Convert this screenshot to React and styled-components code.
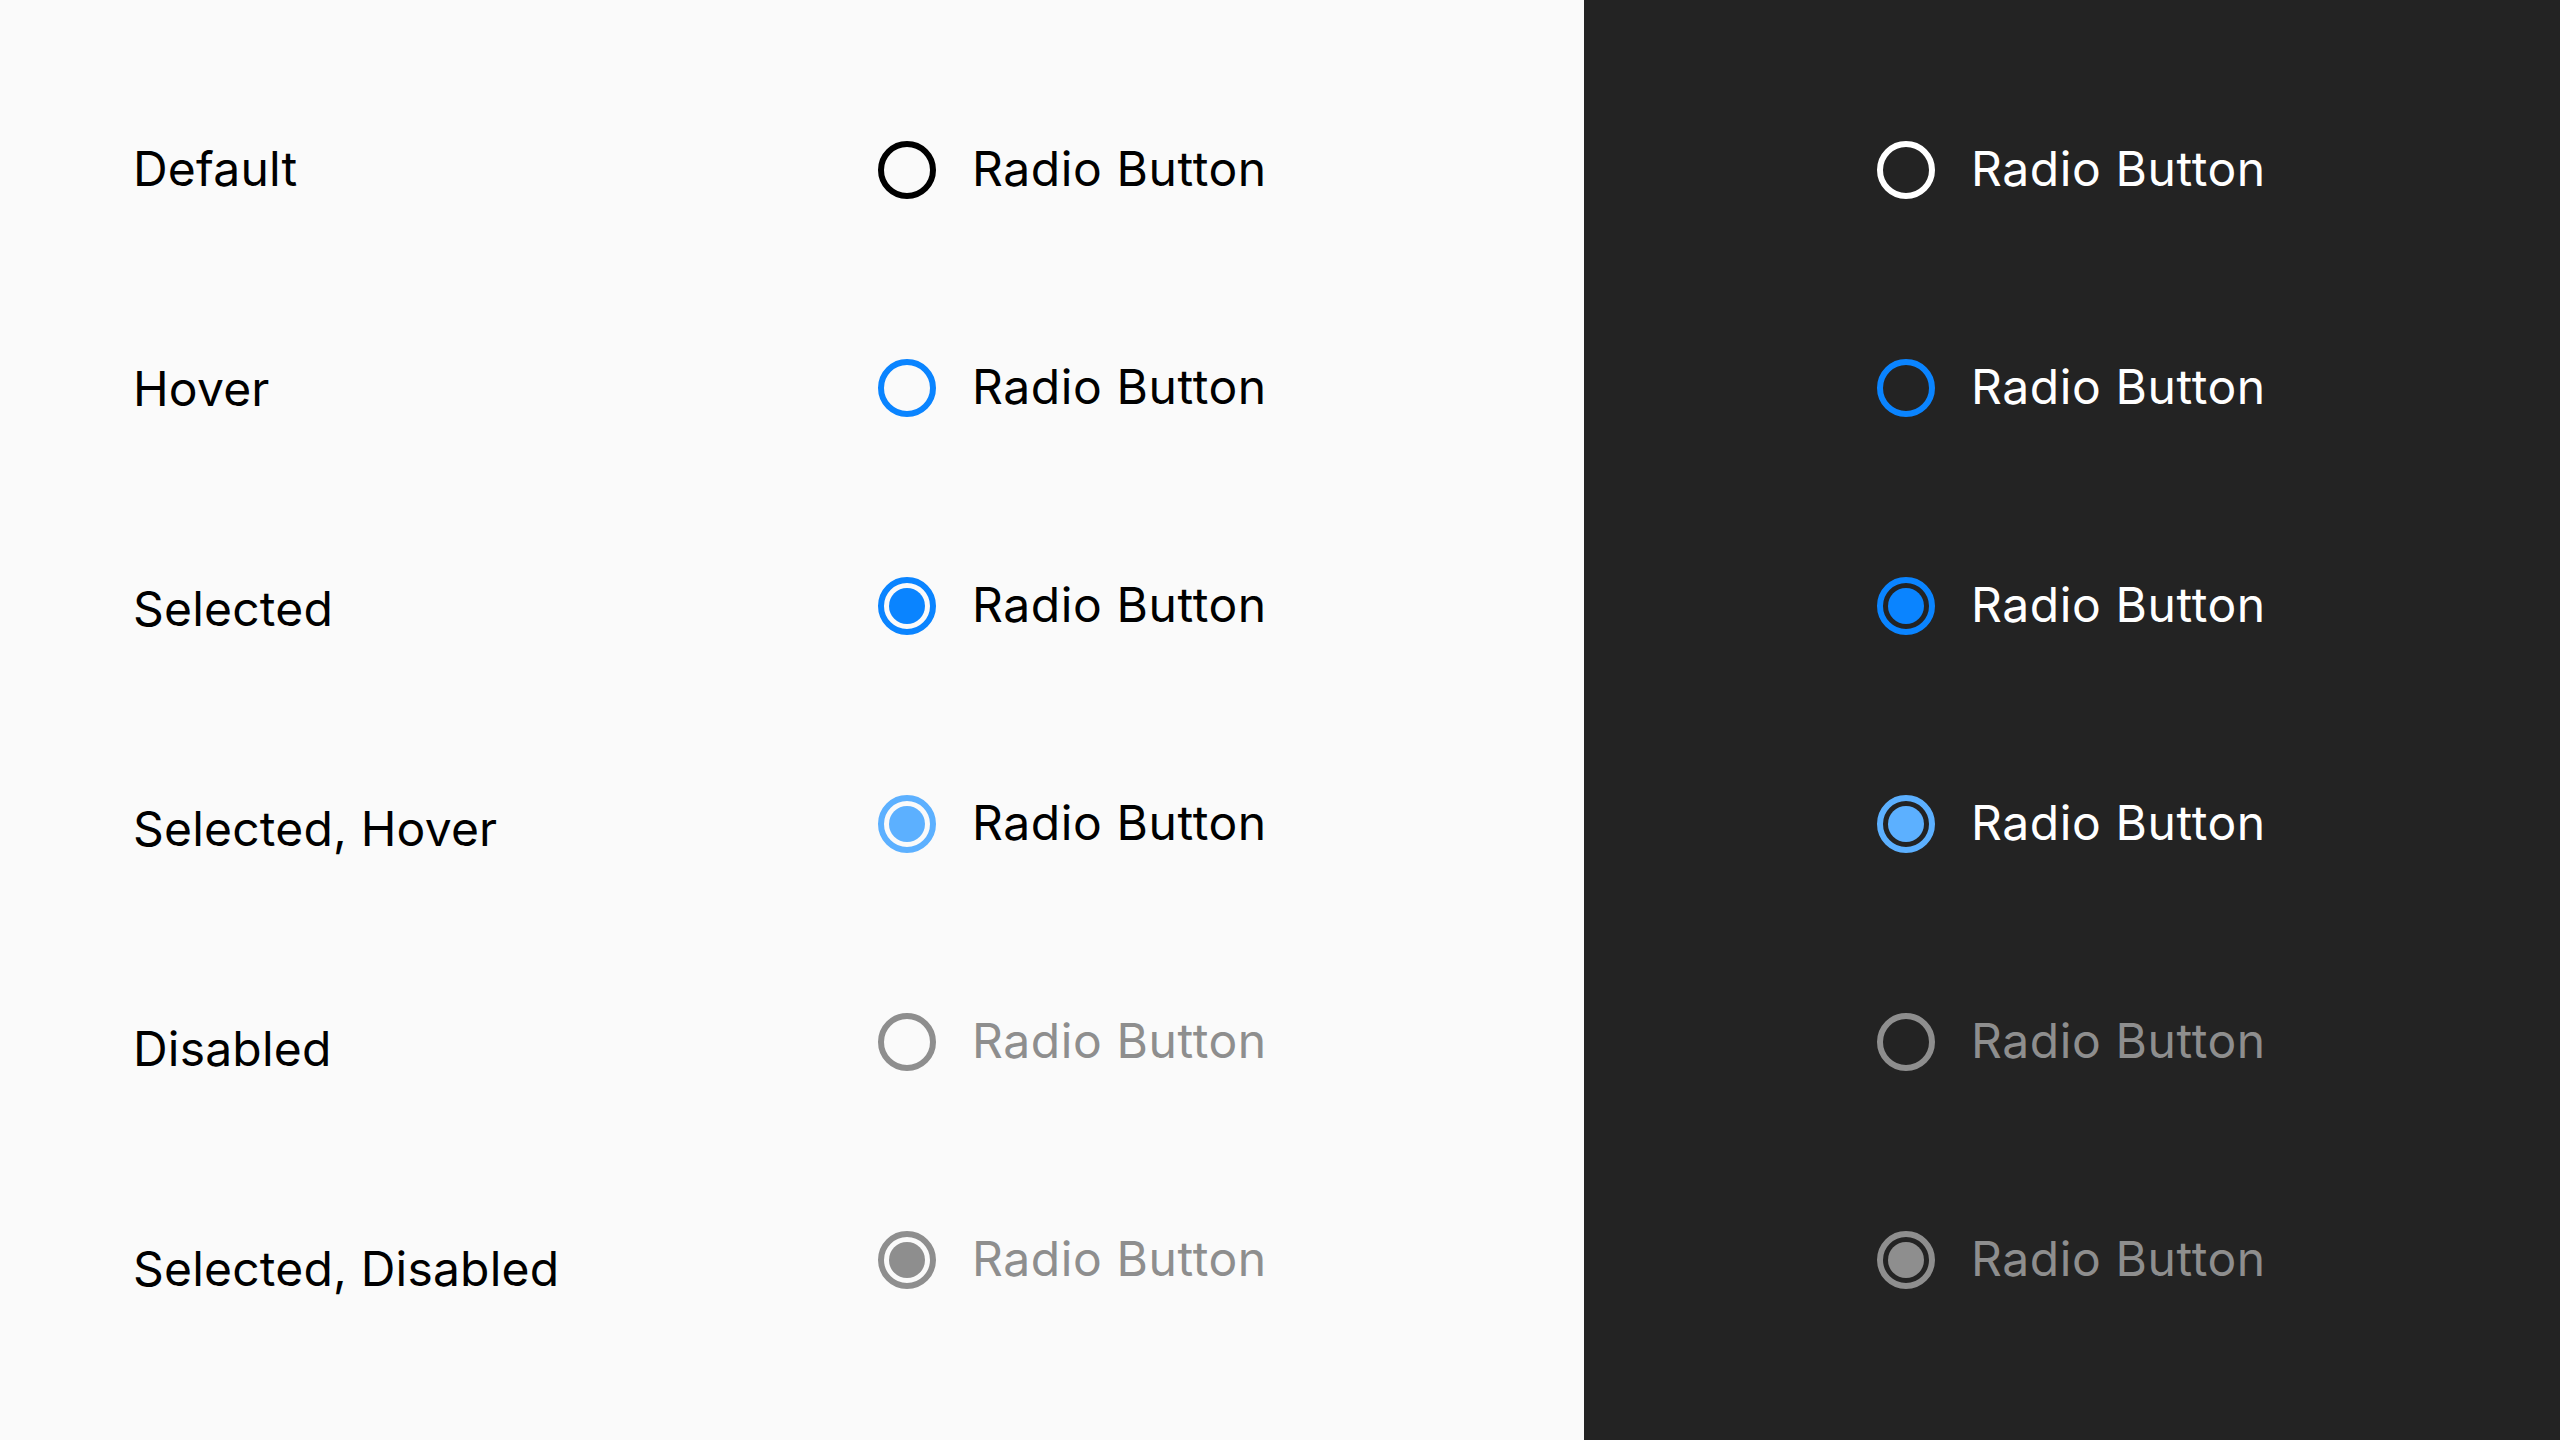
import React from 'react';
import styled, { createGlobalStyle } from 'styled-components';

const GlobalStyle = createGlobalStyle`
  html, body {
    margin: 0;
    padding: 0;
  }
  body {
    font-family: Inter, "Noto Sans", sans-serif;
    -webkit-font-smoothing: antialiased;
  }
`;

const Page = styled.div`
  display: grid;
  grid-template-columns: 1584px 1fr;
  width: 2560px;
  height: 1440px;
`;

const Panel = styled.div`
  background: ${(p) => (p.dark ? '#232323' : '#fafafa')};
  padding: 61px 0 0 ${(p) => (p.dark ? '293px' : '133px')};
  display: flex;
  align-items: flex-start;
`;

const Column = styled.div`
  width: ${(p) => p.width || 'auto'};
  margin-top: ${(p) => p.offset || 0}px;
  display: flex;
  flex-direction: column;
`;

const Row = styled.div`
  height: ${(p) => p.height || 218}px;
  display: flex;
  align-items: center;
`;

const Label = styled.div`
  font-size: 48px;
  color: #000;
  font-weight: 400;
  letter-spacing: 0.2px;
`;

const Option = styled.label`
  display: flex;
  align-items: center;
  gap: 36px;
  font-size: 48px;
  font-weight: 400;
  letter-spacing: 0.6px;
  color: ${(p) => (p.disabled ? '#8e8e8e' : p.dark ? '#ffffff' : '#000000')};
`;

const Text = styled.span`
  margin-top: -3px;
`;

const Circle = styled.span`
  box-sizing: border-box;
  width: 58px;
  height: 58px;
  border-radius: 50%;
  border: 6px solid ${(p) => p.color};
  display: flex;
  align-items: center;
  justify-content: center;
  flex-shrink: 0;
`;

const Dot = styled.span`
  width: 36px;
  height: 36px;
  border-radius: 50%;
  background: ${(p) => p.color};
`;

const states = [
  { label: 'Default', ring: { light: '#000000', dark: '#ffffff' }, selected: false },
  { label: 'Hover', ring: { light: '#0a84ff', dark: '#0a84ff' }, selected: false },
  { label: 'Selected', ring: { light: '#0a84ff', dark: '#0a84ff' }, selected: true },
  { label: 'Selected, Hover', ring: { light: '#5cb0ff', dark: '#5cb0ff' }, selected: true },
  { label: 'Disabled', ring: { light: '#8e8e8e', dark: '#8e8e8e' }, selected: false, disabled: true },
  { label: 'Selected, Disabled', ring: { light: '#8e8e8e', dark: '#8e8e8e' }, selected: true, disabled: true },
];

const Radio = ({ state, dark }) => {
  const color = dark ? state.ring.dark : state.ring.light;
  return (
    <Option dark={dark} disabled={state.disabled}>
      <Circle color={color}>{state.selected && <Dot color={color} />}</Circle>
      <Text>Radio Button</Text>
    </Option>
  );
};

const App = () => (
  <>
    <GlobalStyle />
    <Page>
      <Panel>
        <Column width="745px" offset={-3}>
          {states.map((s) => (
            <Row key={s.label} height={220}>
              <Label>{s.label}</Label>
            </Row>
          ))}
        </Column>
        <Column>
          {states.map((s) => (
            <Row key={s.label}>
              <Radio state={s} />
            </Row>
          ))}
        </Column>
      </Panel>
      <Panel dark>
        <Column>
          {states.map((s) => (
            <Row key={s.label}>
              <Radio state={s} dark />
            </Row>
          ))}
        </Column>
      </Panel>
    </Page>
  </>
);

export default App;
